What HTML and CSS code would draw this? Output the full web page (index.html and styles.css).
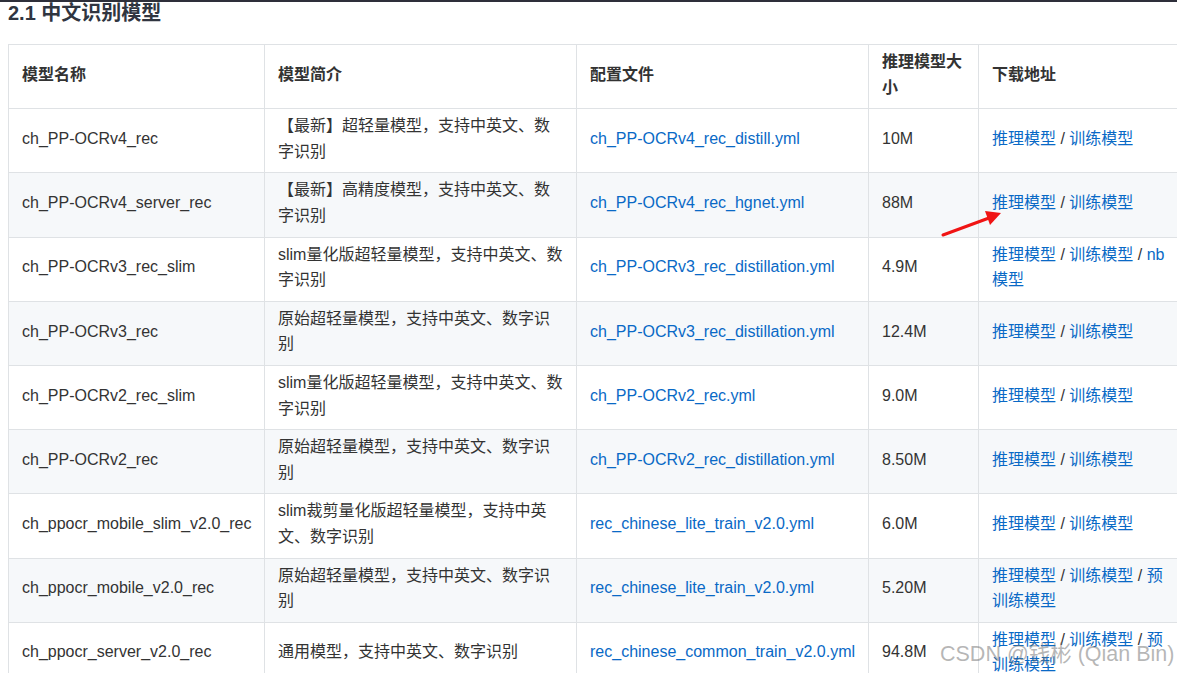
FILE: index.html
```html
<!DOCTYPE html>
<html lang="zh">
<head>
<meta charset="utf-8">
<title>2.1 中文识别模型</title>
<link rel="stylesheet" href="styles.css">
</head>
<body>
<div class="topbar"></div>
<div class="content">
  <h3 class="title">2.1 中文识别模型</h3>
  <table class="models">
    <colgroup>
      <col class="c1"><col class="c2"><col class="c3"><col class="c4"><col class="c5">
    </colgroup>
    <thead>
      <tr><th>模型名称</th><th>模型简介</th><th>配置文件</th><th>推理模型大小</th><th>下载地址</th></tr>
    </thead>
    <tbody>
      <tr><td>ch_PP-OCRv4_rec</td><td>【最新】超轻量模型，支持中英文、数字识别</td><td><a href="#">ch_PP-OCRv4_rec_distill.yml</a></td><td>10M</td><td><a href="#">推理模型</a> / <a href="#">训练模型</a></td></tr>
      <tr><td>ch_PP-OCRv4_server_rec</td><td>【最新】高精度模型，支持中英文、数字识别</td><td><a href="#">ch_PP-OCRv4_rec_hgnet.yml</a></td><td>88M</td><td><a href="#">推理模型</a> / <a href="#">训练模型</a></td></tr>
      <tr><td>ch_PP-OCRv3_rec_slim</td><td>slim量化版超轻量模型，支持中英文、数字识别</td><td><a href="#">ch_PP-OCRv3_rec_distillation.yml</a></td><td>4.9M</td><td><a href="#">推理模型</a> / <a href="#">训练模型</a> / <a href="#">nb模型</a></td></tr>
      <tr><td>ch_PP-OCRv3_rec</td><td>原始超轻量模型，支持中英文、数字识别</td><td><a href="#">ch_PP-OCRv3_rec_distillation.yml</a></td><td>12.4M</td><td><a href="#">推理模型</a> / <a href="#">训练模型</a></td></tr>
      <tr><td>ch_PP-OCRv2_rec_slim</td><td>slim量化版超轻量模型，支持中英文、数字识别</td><td><a href="#">ch_PP-OCRv2_rec.yml</a></td><td>9.0M</td><td><a href="#">推理模型</a> / <a href="#">训练模型</a></td></tr>
      <tr><td>ch_PP-OCRv2_rec</td><td>原始超轻量模型，支持中英文、数字识别</td><td><a href="#">ch_PP-OCRv2_rec_distillation.yml</a></td><td>8.50M</td><td><a href="#">推理模型</a> / <a href="#">训练模型</a></td></tr>
      <tr><td>ch_ppocr_mobile_slim_v2.0_rec</td><td>slim裁剪量化版超轻量模型，支持中英文、数字识别</td><td><a href="#">rec_chinese_lite_train_v2.0.yml</a></td><td>6.0M</td><td><a href="#">推理模型</a> / <a href="#">训练模型</a></td></tr>
      <tr><td>ch_ppocr_mobile_v2.0_rec</td><td>原始超轻量模型，支持中英文、数字识别</td><td><a href="#">rec_chinese_lite_train_v2.0.yml</a></td><td>5.20M</td><td><a href="#">推理模型</a> / <a href="#">训练模型</a> / <a href="#">预训练模型</a></td></tr>
      <tr><td>ch_ppocr_server_v2.0_rec</td><td>通用模型，支持中英文、数字识别</td><td><a href="#">rec_chinese_common_train_v2.0.yml</a></td><td>94.8M</td><td><a href="#">推理模型</a> / <a href="#">训练模型</a> / <a href="#">预训练模型</a></td></tr>
    </tbody>
  </table>
</div>
<svg class="arrow" width="70" height="40" viewBox="0 0 70 40" aria-hidden="true">
  <line x1="4" y1="33" x2="50" y2="16" stroke="#f01414" stroke-width="3" stroke-linecap="round"/>
  <polygon points="62,11 46,9 51,23" fill="#f01414"/>
</svg>
<div class="watermark">CSDN @钱彬 (Qian Bin)</div>
</body>
</html>
```

FILE: styles.css
```css
html, body {
  margin: 0;
  padding: 0;
  background: #ffffff;
  overflow: hidden;
}
body {
  width: 1177px;
  height: 673px;
  position: relative;
  font-family: "Liberation Sans", "Noto Sans CJK SC", sans-serif;
  color: #333333;
}
.topbar {
  height: 2px;
  background: #2e2f3a;
}
.content {
  padding: 0 8px;
}
.title {
  margin: -1px 0 18px 0;
  font-size: 20px;
  line-height: 25px;
  font-weight: bold;
  color: #303540;
}
.models {
  border-collapse: collapse;
  table-layout: fixed;
  width: 1175px;
  font-size: 16px;
  line-height: 1.6;
}
.c1 { width: 256px; }
.c2 { width: 312px; }
.c3 { width: 292px; }
.c4 { width: 110px; }
.c5 { width: 205px; }
.models th,
.models td {
  border: 1px solid #dfe2e5;
  padding: 4px 13px 8px 13px;
  text-align: left;
  vertical-align: middle;
}
.models th {
  font-weight: bold;
  color: #333333;
}
.models tbody tr:nth-child(even) {
  background: #f6f8fa;
}
.models a {
  color: #0969c6;
  text-decoration: none;
}
.arrow {
  position: absolute;
  left: 939px;
  top: 202px;
}
.watermark {
  position: absolute;
  left: 940px;
  top: 640px;
  font-family: "Liberation Sans", "Noto Sans CJK SC", sans-serif;
  font-size: 21.5px;
  line-height: 28px;
  color: rgba(110, 110, 110, 0.5);
  white-space: nowrap;
}
```
